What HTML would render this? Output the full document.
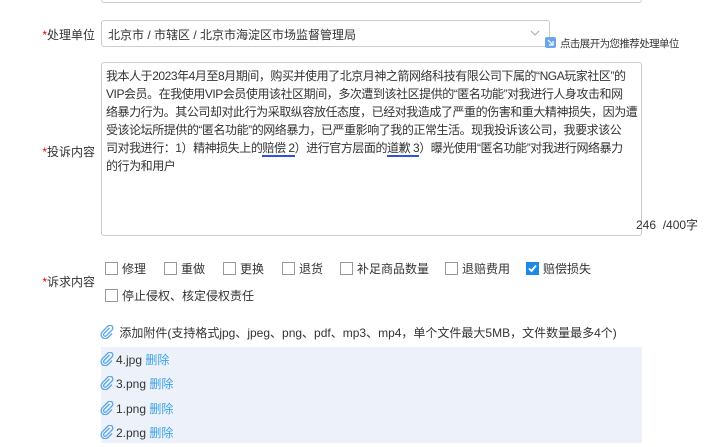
<!DOCTYPE html>
<html><head><meta charset="utf-8"><style>
*{margin:0;padding:0;box-sizing:border-box}
body{width:712px;height:447px;background:#fff;font-family:"Liberation Sans","Noto Sans CJK SC",sans-serif;font-size:12px;color:#333;position:relative;overflow:hidden}
.a{position:absolute}
.lbl{position:absolute;right:617px;white-space:nowrap;font-size:12px;color:#333}
.lbl b{color:#e00;font-weight:normal}
.box{border:1px solid #ccc;border-radius:3px}
.cb{display:inline-block;width:13px;height:13px;border:1px solid #999;vertical-align:-2px;margin-right:4px;background:#fff}
.chk{position:absolute;top:260px;white-space:nowrap}
.link{color:#3aa0e8}
.clip{display:inline-block;vertical-align:-2px;margin-right:2px}
.row{position:absolute;left:100px;white-space:nowrap}
.ta{white-space:nowrap;letter-spacing:-0.45px}
</style></head><body>
<div class="a box" style="left:101px;top:-20px;width:541px;height:23px"></div>

<div class="lbl" style="top:26px"><b>*</b>处理单位</div>
<div class="a box" style="left:101px;top:20px;width:449px;height:27px;padding:5px 6px;color:#333">北京市 / 市辖区 / 北京市海淀区市场监督管理局</div>
<svg class="a" style="left:530px;top:29px" width="10" height="8"><path d="M1 2 L5 6 L9 2" fill="none" stroke="#aaa" stroke-width="1"/></svg>
<div class="a" style="left:545px;top:37px;width:11px;height:11px;background:#6aa7e8;border-radius:2px"></div>
<svg class="a" style="left:545px;top:37px" width="11" height="11"><path d="M3 3 L8 8 M8 4 L8 8 L4 8" fill="none" stroke="#fff" stroke-width="1.2"/></svg>
<div class="a" style="left:560px;top:36px;font-size:10.5px;letter-spacing:-0.6px;white-space:nowrap">点击展开为您推荐处理单位</div>

<div class="lbl" style="top:143px"><b>*</b>投诉内容</div>
<div class="a box ta" style="left:101px;top:62px;width:541px;height:174px;padding:4px 4px;line-height:18px;font-size:12px;color:#333">我本人于2023年4月至8月期间，购买并使用了北京月神之箭网络科技有限公司下属的“NGA玩家社区”的<br>VIP会员。在我使用VIP会员使用该社区期间，多次遭到该社区提供的“匿名功能”对我进行人身攻击和网<br>络暴力行为。其公司却对此行为采取纵容放任态度，已经对我造成了严重的伤害和重大精神损失，因为遭<br>受该论坛所提供的“匿名功能”的网络暴力，已严重影响了我的正常生活。现我投诉该公司，我要求该公<br>司对我进行：1）精神损失上的<span style="border-bottom:2px solid #3050e0">赔偿 2</span>）进行官方层面的<span style="border-bottom:2px solid #3050e0">道歉 3</span>）曝光使用“匿名功能”对我进行网络暴力<br>的行为和用户</div>
<div class="a" style="left:636px;top:216px;white-space:nowrap">246 &nbsp;/400字</div>

<div class="lbl" style="top:273px"><b>*</b>诉求内容</div>
<div class="chk" style="left:105px"><span class="cb"></span>修理</div>
<div class="chk" style="left:164px"><span class="cb"></span>重做</div>
<div class="chk" style="left:223px"><span class="cb"></span>更换</div>
<div class="chk" style="left:282px"><span class="cb"></span>退货</div>
<div class="chk" style="left:340px"><span class="cb"></span>补足商品数量</div>
<div class="chk" style="left:445px"><span class="cb"></span>退赔费用</div>
<div class="chk" style="left:526px"><span class="cb" style="background:#1e88e5;border-color:#1e88e5;position:relative"><svg style="position:absolute;left:0px;top:0px" width="11" height="11"><path d="M2 5.5 L4.5 8 L9 2.5" fill="none" stroke="#fff" stroke-width="1.8"/></svg></span>赔偿损失</div>
<div class="chk" style="left:105px;top:287px"><span class="cb"></span>停止侵权、核定侵权责任</div>

<svg width="0" height="0" style="position:absolute"><defs><symbol id="clip" viewBox="0 0 14 14"><path d="M9.5 3 L4 8.5 a1.6 1.6 0 0 0 2.3 2.3 L12 5 a2.8 2.8 0 0 0 -4 -4 L2.3 6.8 a4 4 0 0 0 5.7 5.7 L12 8.5" fill="none" stroke="#5aa6e6" stroke-width="1.3"/></symbol></defs></svg>
<div class="row" style="top:324px"><svg class="clip" width="14" height="14"><use href="#clip"/></svg> 添加附件(支持格式jpg、jpeg、png、pdf、mp3、mp4，单个文件最大5MB，文件数量最多4个)</div>
<div class="a" style="left:101px;top:347px;width:541px;height:96px;background:#edf2fa"></div>
<div class="row" style="top:351px"><svg class="clip" width="14" height="14"><use href="#clip"/></svg>4.jpg <span class="link">删除</span></div>
<div class="row" style="top:375px"><svg class="clip" width="14" height="14"><use href="#clip"/></svg>3.png <span class="link">删除</span></div>
<div class="row" style="top:400px"><svg class="clip" width="14" height="14"><use href="#clip"/></svg>1.png <span class="link">删除</span></div>
<div class="row" style="top:424px"><svg class="clip" width="14" height="14"><use href="#clip"/></svg>2.png <span class="link">删除</span></div>
</body></html>
